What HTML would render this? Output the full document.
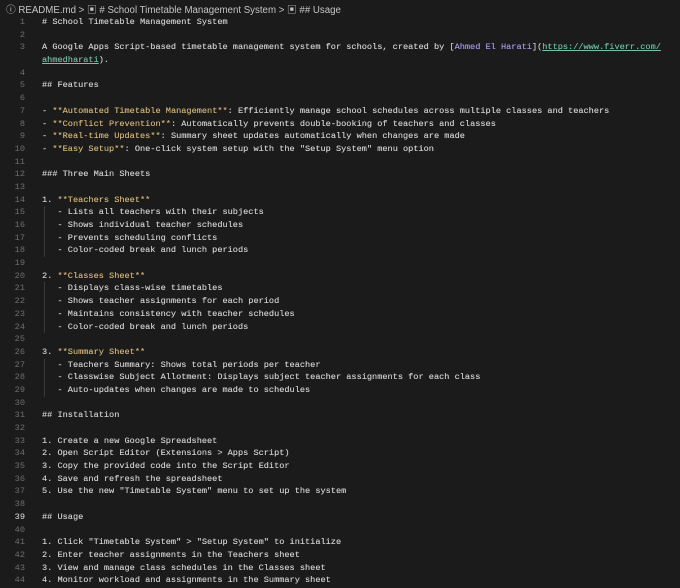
<!DOCTYPE html>
<html><head><style>
body{margin:0;width:680px;height:588px;background:#1b1b1b;overflow:hidden;font-family:"Liberation Mono",monospace;}
.bc{position:absolute;top:2px;left:6px;font:9.7px "Liberation Sans",sans-serif;color:#c4c4c4;white-space:nowrap}
.ed{position:absolute;top:16px;left:0;}
.l{height:12.7px;line-height:12.7px;font-size:8.6px;white-space:pre;color:#d6d6d6;position:relative;-webkit-text-stroke:0.12px currentColor}
.n{display:inline-block;width:25px;text-align:right;color:#6e6e6e;margin-right:17px;-webkit-text-stroke:0}
.b{color:#d9ba7c}
.p{color:#a79cf0}
.u{color:#6fc3a8;text-decoration:underline}
.g{position:absolute;left:44px;top:0;width:1px;height:100%;background:#3a3a3a}
</style></head><body>
<div class="bc">ⓘ README.md &gt; ▣ # School Timetable Management System &gt; ▣ ## Usage</div>
<div class="ed">
<div class="l"><span class="n">1</span># School Timetable Management System</div>
<div class="l"><span class="n">2</span></div>
<div class="l"><span class="n">3</span>A Google Apps Script-based timetable management system for schools, created by [<span class="p">Ahmed El Harati</span>](<span class="u">https://www.fiverr.com/</span></div>
<div class="l"><span class="n"></span><span class="u">ahmedharati</span>).</div>
<div class="l"><span class="n">4</span></div>
<div class="l"><span class="n">5</span>## Features</div>
<div class="l"><span class="n">6</span></div>
<div class="l"><span class="n">7</span>- <span class="b">**Automated Timetable Management**</span>: Efficiently manage school schedules across multiple classes and teachers</div>
<div class="l"><span class="n">8</span>- <span class="b">**Conflict Prevention**</span>: Automatically prevents double-booking of teachers and classes</div>
<div class="l"><span class="n">9</span>- <span class="b">**Real-time Updates**</span>: Summary sheet updates automatically when changes are made</div>
<div class="l"><span class="n">10</span>- <span class="b">**Easy Setup**</span>: One-click system setup with the "Setup System" menu option</div>
<div class="l"><span class="n">11</span></div>
<div class="l"><span class="n">12</span>### Three Main Sheets</div>
<div class="l"><span class="n">13</span></div>
<div class="l"><span class="n">14</span>1. <span class="b">**Teachers Sheet**</span></div>
<div class="l"><i class="g"></i><span class="n">15</span>   - Lists all teachers with their subjects</div>
<div class="l"><i class="g"></i><span class="n">16</span>   - Shows individual teacher schedules</div>
<div class="l"><i class="g"></i><span class="n">17</span>   - Prevents scheduling conflicts</div>
<div class="l"><i class="g"></i><span class="n">18</span>   - Color-coded break and lunch periods</div>
<div class="l"><span class="n">19</span></div>
<div class="l"><span class="n">20</span>2. <span class="b">**Classes Sheet**</span></div>
<div class="l"><i class="g"></i><span class="n">21</span>   - Displays class-wise timetables</div>
<div class="l"><i class="g"></i><span class="n">22</span>   - Shows teacher assignments for each period</div>
<div class="l"><i class="g"></i><span class="n">23</span>   - Maintains consistency with teacher schedules</div>
<div class="l"><i class="g"></i><span class="n">24</span>   - Color-coded break and lunch periods</div>
<div class="l"><span class="n">25</span></div>
<div class="l"><span class="n">26</span>3. <span class="b">**Summary Sheet**</span></div>
<div class="l"><i class="g"></i><span class="n">27</span>   - Teachers Summary: Shows total periods per teacher</div>
<div class="l"><i class="g"></i><span class="n">28</span>   - Classwise Subject Allotment: Displays subject teacher assignments for each class</div>
<div class="l"><i class="g"></i><span class="n">29</span>   - Auto-updates when changes are made to schedules</div>
<div class="l"><span class="n">30</span></div>
<div class="l"><span class="n">31</span>## Installation</div>
<div class="l"><span class="n">32</span></div>
<div class="l"><span class="n">33</span>1. Create a new Google Spreadsheet</div>
<div class="l"><span class="n">34</span>2. Open Script Editor (Extensions &gt; Apps Script)</div>
<div class="l"><span class="n">35</span>3. Copy the provided code into the Script Editor</div>
<div class="l"><span class="n">36</span>4. Save and refresh the spreadsheet</div>
<div class="l"><span class="n">37</span>5. Use the new "Timetable System" menu to set up the system</div>
<div class="l"><span class="n">38</span></div>
<div class="l"><span class="n" style="color:#e0e0e0">39</span>## Usage</div>
<div class="l"><span class="n">40</span></div>
<div class="l"><span class="n">41</span>1. Click "Timetable System" &gt; "Setup System" to initialize</div>
<div class="l"><span class="n">42</span>2. Enter teacher assignments in the Teachers sheet</div>
<div class="l"><span class="n">43</span>3. View and manage class schedules in the Classes sheet</div>
<div class="l"><span class="n">44</span>4. Monitor workload and assignments in the Summary sheet</div>
</div>
</body></html>
